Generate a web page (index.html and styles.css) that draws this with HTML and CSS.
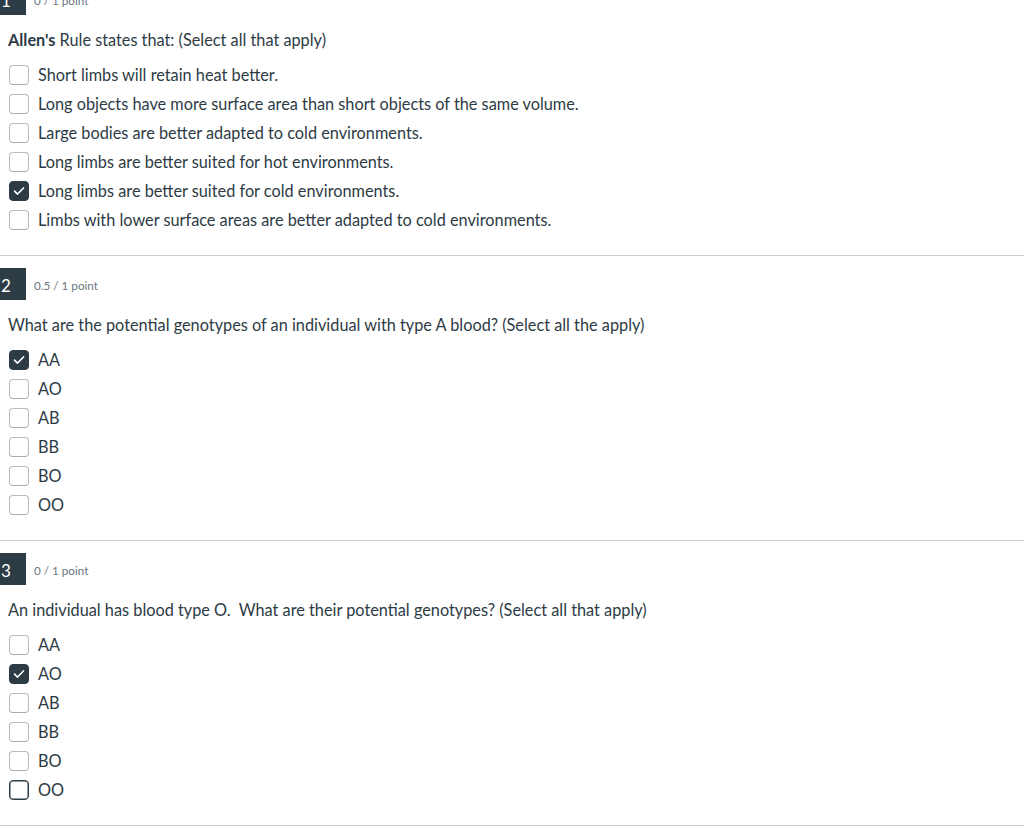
FILE: index.html
```html
<!DOCTYPE html>
<html lang="en">
<head>
<meta charset="utf-8">
<title>Quiz</title>
<link rel="stylesheet" href="styles.css">
</head>
<body>
<div class="quiz">
  <section class="question">
    <div class="q-header"><span class="q-num">1</span><span class="q-score">0 / 1 point</span></div>
    <p class="q-text"><strong>Allen's</strong> Rule states that: (Select all that apply)</p>
    <ul class="options">
      <li class="option"><span class="box"></span><span>Short limbs will retain heat better.</span></li>
      <li class="option"><span class="box"></span><span>Long objects have more surface area than short objects of the same volume.</span></li>
      <li class="option"><span class="box"></span><span>Large bodies are better adapted to cold environments.</span></li>
      <li class="option"><span class="box"></span><span>Long limbs are better suited for hot environments.</span></li>
      <li class="option"><span class="box checked"><svg viewBox="0 0 20 20" width="20" height="20"><path d="M5 10.2 L8.4 13.4 L15 6.6" fill="none" stroke="#fff" stroke-width="1.8" stroke-linecap="round" stroke-linejoin="round"/></svg></span><span>Long limbs are better suited for cold environments.</span></li>
      <li class="option"><span class="box"></span><span>Limbs with lower surface areas are better adapted to cold environments.</span></li>
    </ul>
  </section>
  <section class="question">
    <div class="q-header"><span class="q-num">2</span><span class="q-score">0.5 / 1 point</span></div>
    <p class="q-text">What are the potential genotypes of an individual with type A blood? (Select all the apply)</p>
    <ul class="options">
      <li class="option"><span class="box checked"><svg viewBox="0 0 20 20" width="20" height="20"><path d="M5 10.2 L8.4 13.4 L15 6.6" fill="none" stroke="#fff" stroke-width="1.8" stroke-linecap="round" stroke-linejoin="round"/></svg></span><span>AA</span></li>
      <li class="option"><span class="box"></span><span>AO</span></li>
      <li class="option"><span class="box"></span><span>AB</span></li>
      <li class="option"><span class="box"></span><span>BB</span></li>
      <li class="option"><span class="box"></span><span>BO</span></li>
      <li class="option"><span class="box"></span><span>OO</span></li>
    </ul>
  </section>
  <section class="question">
    <div class="q-header"><span class="q-num">3</span><span class="q-score">0 / 1 point</span></div>
    <p class="q-text">An individual has blood type O.&nbsp; What are their potential genotypes? (Select all that apply)</p>
    <ul class="options">
      <li class="option"><span class="box"></span><span>AA</span></li>
      <li class="option"><span class="box checked"><svg viewBox="0 0 20 20" width="20" height="20"><path d="M5 10.2 L8.4 13.4 L15 6.6" fill="none" stroke="#fff" stroke-width="1.8" stroke-linecap="round" stroke-linejoin="round"/></svg></span><span>AO</span></li>
      <li class="option"><span class="box"></span><span>AB</span></li>
      <li class="option"><span class="box"></span><span>BB</span></li>
      <li class="option"><span class="box"></span><span>BO</span></li>
      <li class="option"><span class="box focused"></span><span>OO</span></li>
    </ul>
  </section>
</div>
</body>
</html>
```
FILE: styles.css
```css
* { box-sizing: border-box; }
html, body {
  margin: 0;
  padding: 0;
  background: #fff;
  overflow: hidden;
}
body {
  font-family: Lato, "Liberation Sans", sans-serif;
  color: #2d3b45;
  font-size: 16.3px;
}
.quiz {
  margin-top: -29px;
}
.question {
  border-bottom: 1px solid #c7cdd1;
  padding-top: 12px;
  padding-bottom: 21px;
}
.q-header {
  display: flex;
  align-items: center;
  height: 32px;
}
.q-num {
  width: 40px;
  height: 32px;
  margin-left: -14px;
  background: #2d3b45;
  color: #fff;
  font-size: 17px;
  display: flex;
  align-items: center;
  justify-content: center;
  padding-top: 2px;
}
.q-score {
  margin-left: 8px;
  font-size: 11.7px;
  color: #6b7780;
  padding-top: 2px;
}
.q-text {
  margin: 13px 0 0 8px;
  line-height: 24px;
  font-size: 16.3px;
}
.q-text strong { font-weight: 700; }
.options {
  list-style: none;
  margin: 8px 0 0 0;
  padding: 0;
}
.option {
  display: flex;
  align-items: center;
  height: 29px;
  padding-left: 9px;
  line-height: 20px;
}
.box {
  width: 20px;
  height: 20px;
  border: 1px solid #b4bcc2;
  border-bottom-color: #a5aeb5;
  border-radius: 4px;
  margin-right: 9px;
  background: #fff;
  flex: none;
  display: flex;
  align-items: center;
  justify-content: center;
}
.box svg { display: block; }
.box.checked {
  background: #2d3b45;
  border-color: #2d3b45;
}
.box.focused {
  border-color: #2d3b45;
  border-width: 1px;
  box-shadow: inset 0 0 0 0.5px #2d3b45;
}
```
